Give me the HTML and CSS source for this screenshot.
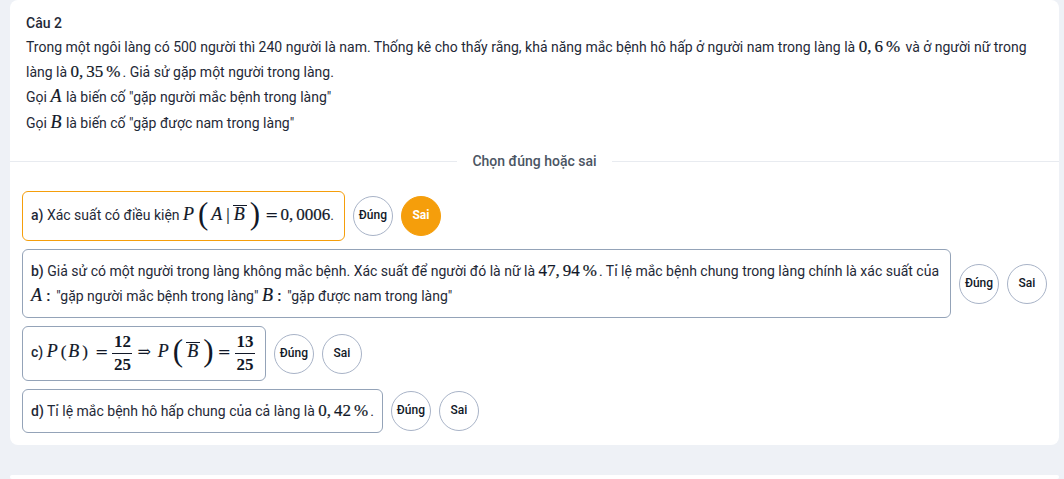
FILE: index.html
```html
<!DOCTYPE html>
<html lang="vi">

<head>
    <meta charset="UTF-8">
    <meta name="viewport" content="width=device-width, initial-scale=1.0">
    <title>Câu 2</title>
    <link rel="stylesheet" href="styles.css">
</head>

<body>
    <section class="card">
        <div class="question">
            <div class="q_title">Câu 2</div>
            <div>Trong một ngôi làng có 500 người thì 240 người là nam. Thống kê cho thấy rằng, khả năng mắc bệnh hô hấp ở người nam trong làng là <span class="math">0<span class="comma">,</span>6<span class="pct">%</span></span> và ở người nữ trong làng là <span class="math">0<span class="comma">,</span>35<span class="pct">%</span></span>. Giả sử gặp một người trong làng.</div>
            <div>Gọi <span class="math"><i>A</i></span> là biến cố "gặp người mắc bệnh trong làng"</div>
            <div>Gọi <span class="math"><i>B</i></span> là biến cố "gặp được nam trong làng"</div>
        </div>

        <div class="divider"><span>Chọn đúng hoặc sai</span></div>

        <div class="options">
            <div class="row">
                <div class="box box_active">
                    <b>a)</b> Xác suất có điều kiện <span class="math"><i>P</i><span class="paren paren_l">(</span><i>A</i><span class="bar">|</span><span class="over"><i>B</i></span><span class="paren paren_r">)</span><span class="rel rel_tight">=</span>0<span class="comma">,</span>0006</span>.
                </div>
                <div class="btn">Đúng</div>
                <div class="btn btn_on">Sai</div>
            </div>
            <div class="row">
                <div class="box">
                    <b>b)</b> Giả sử có một người trong làng không mắc bệnh. Xác suất để người đó là nữ là <span class="math">47<span class="comma">,</span>94<span class="pct">%</span></span>. Tỉ lệ mắc bệnh chung trong làng chính là xác suất của <span class="math"><i>A</i><span class="colon">:</span></span> "gặp người mắc bệnh trong làng" <span class="math"><i>B</i><span class="colon">:</span></span> "gặp được nam trong làng"
                </div>
                <div class="btn">Đúng</div>
                <div class="btn">Sai</div>
            </div>
            <div class="row">
                <div class="box box_frac">
                    <b>c)</b> <span class="math"><i>P</i><span class="small_p">(</span><i>B</i><span class="small_p">)</span><span class="rel rel_first">=</span><span class="frac frac_first"><span class="num">12</span><span>25</span></span><span class="rel rel_arrow">⇒</span><i>P</i><span class="paren paren_l">(</span><span class="over"><i>B</i></span><span class="paren paren_r">)</span><span class="rel">=</span><span class="frac frac_last"><span class="num">13</span><span>25</span></span></span>
                </div>
                <div class="btn">Đúng</div>
                <div class="btn">Sai</div>
            </div>
            <div class="row">
                <div class="box">
                    <b>d)</b> Tỉ lệ mắc bệnh hô hấp chung của cả làng là <span class="math">0<span class="comma">,</span>42<span class="pct">%</span></span>.
                </div>
                <div class="btn">Đúng</div>
                <div class="btn">Sai</div>
            </div>
        </div>
    </section>
    <section class="card card_next"></section>
</body>

</html>
```

FILE: styles.css
```css
* {
    margin: 0;
    padding: 0;
    box-sizing: border-box;
}

html,
body {
    height: 479px;
    overflow: hidden;
}

body {
    background-color: #eef1f6;
    font-family: Roboto, "Noto Sans", sans-serif;
    font-size: 14px;
    line-height: 1.8;
    color: #1f2937;
    padding: 0 5px 0 10px;
}

.card {
    background-color: #fff;
    border-radius: 8px;
    padding-bottom: 12px;
}

.card_next {
    margin-top: 30px;
    height: 4px;
    padding: 0;
}

.question {
    padding: 11px 16px 0;
}

.q_title {
    font-weight: 500;
    line-height: 24px;
}

.math {
    font-family: "Liberation Serif", serif;
    font-size: 17px;
    font-weight: 400;
    line-height: 1;
    color: #111827;
    -webkit-text-stroke: 0.2px #111827;
}

.math i {
    font-size: 18px;
    padding: 0 1px 0 0;
}

.comma {
    margin-right: 3px;
}

.pct {
    margin: 0 2px 0 3px;
}

.colon {
    margin: 0 2px 0 3px;
}

.rel {
    margin: 0 3px 0 2px;
    font-family: "DejaVu Serif", serif;
    font-size: 16px;
    line-height: 0;
    -webkit-text-stroke: 0;
}

.rel_tight {
    margin: 0 2px 0 3px;
}

.rel_first {
    margin-left: 5px;
}

.rel_arrow {
    margin-right: 7px;
}

.paren {
    display: inline-block;
    font-size: 31px;
    font-weight: 400;
    line-height: 0;
    vertical-align: -4px;
    -webkit-text-stroke: 0;
}

.paren_l {
    margin: 0 3px 0 3px;
}

.paren_r {
    margin: 0 2px 0 3px;
}

.small_p {
    margin: 0 2px;
}

.bar {
    margin: 0 3px 0 3px;
    font-weight: 400;
}

.over {
    display: inline-block;
    border-top: 1px solid #111827;
    line-height: 17px;
    padding: 0 1px;
}

.frac {
    display: inline-flex;
    flex-direction: column;
    align-items: center;
    vertical-align: middle;
    margin: 0 1px;
    font-weight: 700;
    line-height: 22px;
    -webkit-text-stroke: 0;
}

.frac_first {
    margin-right: 3px;
}

.frac_last {
    margin-right: 2px;
}

.num {
    border-bottom: 1px solid #111827;
    width: 20px;
    text-align: center;
}

.divider {
    display: flex;
    align-items: center;
    margin-top: 13px;
    color: #4b5563;
    font-weight: 500;
}

.divider::before,
.divider::after {
    content: "";
    flex: 1;
    border-top: 1px solid #e8ebf0;
}

.divider span {
    padding: 0 15px;
}

.options {
    display: flex;
    flex-direction: column;
    gap: 8px;
    margin-top: 17px;
    padding: 0 12px;
}

.row {
    display: flex;
    align-items: center;
    gap: 8px;
}

.box {
    flex: 0 1 auto;
    border: 1px solid #94a3b8;
    border-radius: 6px;
    padding: 8.5px 8px 8px;
}

.box b {
    font-weight: 500;
}

.box_active {
    border-color: #f59e0b;
    padding: 11px 10px 12px 8px;
}

.box_frac {
    padding-top: 4px;
    padding-bottom: 4px;
}

.btn {
    flex: none;
    width: 40px;
    height: 40px;
    border: 1px solid #a8b3c7;
    border-radius: 50%;
    display: flex;
    align-items: center;
    justify-content: center;
    font-size: 12px;
    font-weight: 500;
    color: #111827;
}

.btn_on {
    background-color: #f59e0b;
    border-color: #f59e0b;
    color: #fff;
    font-weight: 700;
}
```
